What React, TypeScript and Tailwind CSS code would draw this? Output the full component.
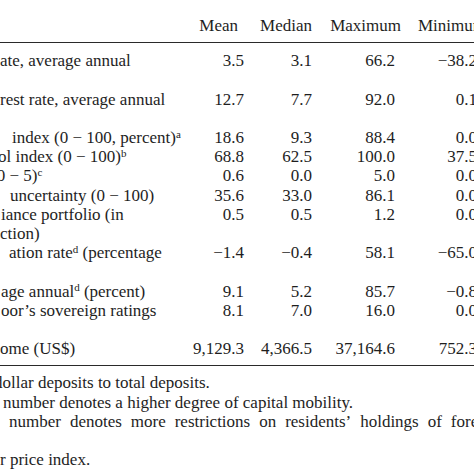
import React from "react";

type Row = {
  label: React.ReactNode;
  cont?: React.ReactNode;
  vals: string[];
};

const Sup = ({ c }: { c: string }) => <sup className="text-[11px]">{c}</sup>;

const rows: Row[] = [
  { label: <span>ate, average annual</span>, cont: <span>&nbsp;</span>, vals: ["3.5", "3.1", "66.2", "−38.2"] },
  { label: <span>rest rate, average annual</span>, cont: <span>&nbsp;</span>, vals: ["12.7", "7.7", "92.0", "0.1"] },
  { label: <span className="pl-[12px]">index (0 − 100, percent)<Sup c="a" /></span>, vals: ["18.6", "9.3", "88.4", "0.0"] },
  { label: <span className="ml-[-2px]">ol index (0 − 100)<Sup c="b" /></span>, vals: ["68.8", "62.5", "100.0", "37.5"] },
  { label: <span className="ml-[-9px]">(0 − 5)<Sup c="c" /></span>, vals: ["0.6", "0.0", "5.0", "0.0"] },
  { label: <span className="pl-[10px]">uncertainty (0 − 100)</span>, vals: ["35.6", "33.0", "86.1", "0.0"] },
  { label: <span className="pl-[1px]">iance portfolio (in</span>, cont: <span>ction)</span>, vals: ["0.5", "0.5", "1.2", "0.0"] },
  { label: <span className="pl-[9px]">ation rate<Sup c="d" /> (percentage</span>, cont: <span>&nbsp;</span>, vals: ["−1.4", "−0.4", "58.1", "−65.0"] },
  { label: <span className="pl-[1px]">age annual<Sup c="d" /> (percent)</span>, vals: ["9.1", "5.2", "85.7", "−0.8"] },
  { label: <span className="pl-[1px]">oor’s sovereign ratings</span>, cont: <span>&nbsp;</span>, vals: ["8.1", "7.0", "16.0", "0.0"] },
  { label: <span>ome (US$)</span>, vals: ["9,129.3", "4,366.5", "37,164.6", "752.3"] },
];

export default function App() {
  const words = ["number", "denotes", "more", "restrictions", "on", "residents’", "holdings", "of", "foreign"];
  return (
    <div className="w-[474px] h-[474px] overflow-hidden bg-white text-[#1e1e1e] text-[17px] leading-[19.2px] font-['Liberation_Serif','Times_New_Roman',serif]">
      <div className="w-[477px]">
        {/* header */}
        <div className="grid grid-cols-[180px_64px_68px_83px_82px] pt-[16px]">
          <div></div>
          <div className="text-right pr-[6px] whitespace-nowrap">Mean</div>
          <div className="text-right whitespace-nowrap">Median</div>
          <div className="text-right mr-[-6px] whitespace-nowrap">Maximum</div>
          <div className="pl-[23px] whitespace-nowrap">Minimum</div>
        </div>
        <div className="mt-[7px] border-t-[1.5px] border-[#2a2a2a] w-[500px]"></div>
        {/* body */}
        <div className="pt-[8px]">
          {rows.map((r, i) => (
            <div key={i} className="grid grid-cols-[180px_64px_68px_83px_82px]">
              <div className="whitespace-nowrap flex flex-col">
                <div className="flex">{r.label}</div>
                {r.cont && <div className="flex">{r.cont}</div>}
              </div>
              {r.vals.map((v, j) => (
                <div key={j} className="text-right whitespace-nowrap">
                  {v}
                </div>
              ))}
            </div>
          ))}
        </div>
        <div className="mt-[7px] border-t-[1.5px] border-[#2a2a2a] w-[500px]"></div>
        {/* footnotes */}
        <div className="mt-[7px] whitespace-nowrap">
          <div className="ml-[-6px]">dollar deposits to total deposits.</div>
          <div className="pl-[3px]">number denotes a higher degree of capital mobility.</div>
          <div className="ml-[9px] w-[491px] flex justify-between">
            {words.map((w) => (
              <span key={w}>{w}</span>
            ))}
          </div>
          <div>&nbsp;</div>
          <div>r price index.</div>
        </div>
      </div>
    </div>
  );
}
